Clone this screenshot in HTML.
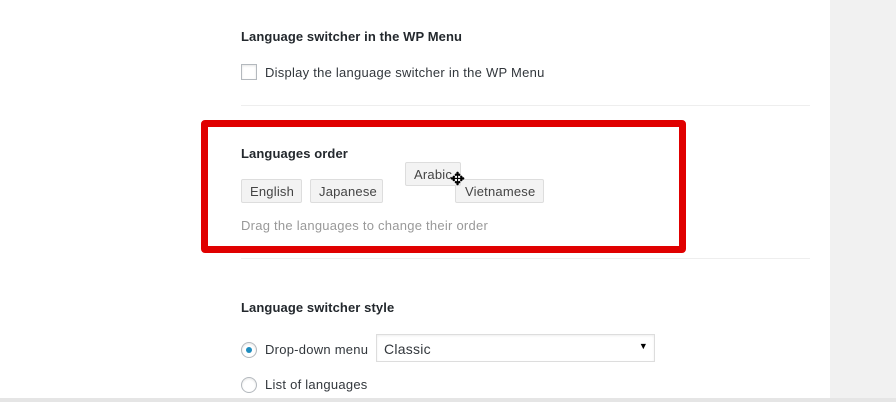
<html><head><style>
body{margin:0;width:896px;height:402px;background:#fff;position:relative;overflow:hidden;font-family:"Liberation Sans",sans-serif;font-size:13px;color:#32373c;letter-spacing:0.25px}
.a{position:absolute}
.h{font-weight:bold;color:#23282d;font-size:13px;letter-spacing:0.1px}
.btn{position:absolute;height:24px;line-height:24px;border:1px solid #ddd;background:#f3f3f3;border-radius:2px;padding:0 8px;box-sizing:border-box;font-size:13px;color:#444;letter-spacing:0.2px}
.radio{position:absolute;width:16px;height:16px;border:1px solid #b4b9be;border-radius:50%;box-sizing:border-box;background:#fff;box-shadow:inset 0 1px 2px rgba(0,0,0,.1)}
</style></head><body>
<div class="a" style="left:830px;top:0;width:66px;height:402px;background:#f1f1f1"></div>
<div class="a" style="left:0;top:398px;width:896px;height:4px;background:#e5e5e5"></div>
<div class="a h" style="left:241px;top:29px">Language switcher in the WP Menu</div>
<div class="a" style="left:241px;top:64px;width:16px;height:16px;border:1px solid #b4b9be;box-sizing:border-box;box-shadow:inset 0 1px 2px rgba(0,0,0,.1)"></div>
<div class="a" style="left:265px;top:65px">Display the language switcher in the WP Menu</div>
<div class="a" style="left:241px;top:105px;width:569px;height:1px;background:#eee"></div>
<div class="a" style="left:201px;top:120px;width:485px;height:133px;border:7px solid #e00000;border-radius:4px;box-sizing:border-box"></div>
<div class="a h" style="left:241px;top:146px">Languages order</div>
<div class="btn" style="left:241px;top:179px;width:61px">English</div>
<div class="btn" style="left:310px;top:179px;width:73px">Japanese</div>
<div class="btn" style="left:455px;top:179px;width:89px;padding-left:9px">Vietnamese</div>
<div class="btn" style="left:405px;top:162px;width:56px">Arabic</div>
<div class="a" style="left:450px;top:170px;font-size:18px;line-height:18px;color:#000">✥</div>
<div class="a" style="left:241px;top:218px;color:#999">Drag the languages to change their order</div>
<div class="a" style="left:241px;top:258px;width:569px;height:1px;background:#eee"></div>
<div class="a h" style="left:241px;top:300px">Language switcher style</div>
<div class="radio" style="left:241px;top:342px"><div style="position:absolute;left:4px;top:4px;width:6px;height:6px;border-radius:50%;background:#1e8cbe"></div></div>
<div class="a" style="left:265px;top:342px">Drop-down menu</div>
<div class="a" style="left:376px;top:334px;width:279px;height:28px;border:1px solid #ddd;box-sizing:border-box;box-shadow:inset 0 1px 2px rgba(0,0,0,.07)"><span style="position:absolute;left:7px;top:6px;font-size:14px">Classic</span><span style="position:absolute;right:6px;top:6px;font-size:9px;color:#000">▼</span></div>
<div class="radio" style="left:241px;top:377px"></div>
<div class="a" style="left:265px;top:377px">List of languages</div>
</body></html>
